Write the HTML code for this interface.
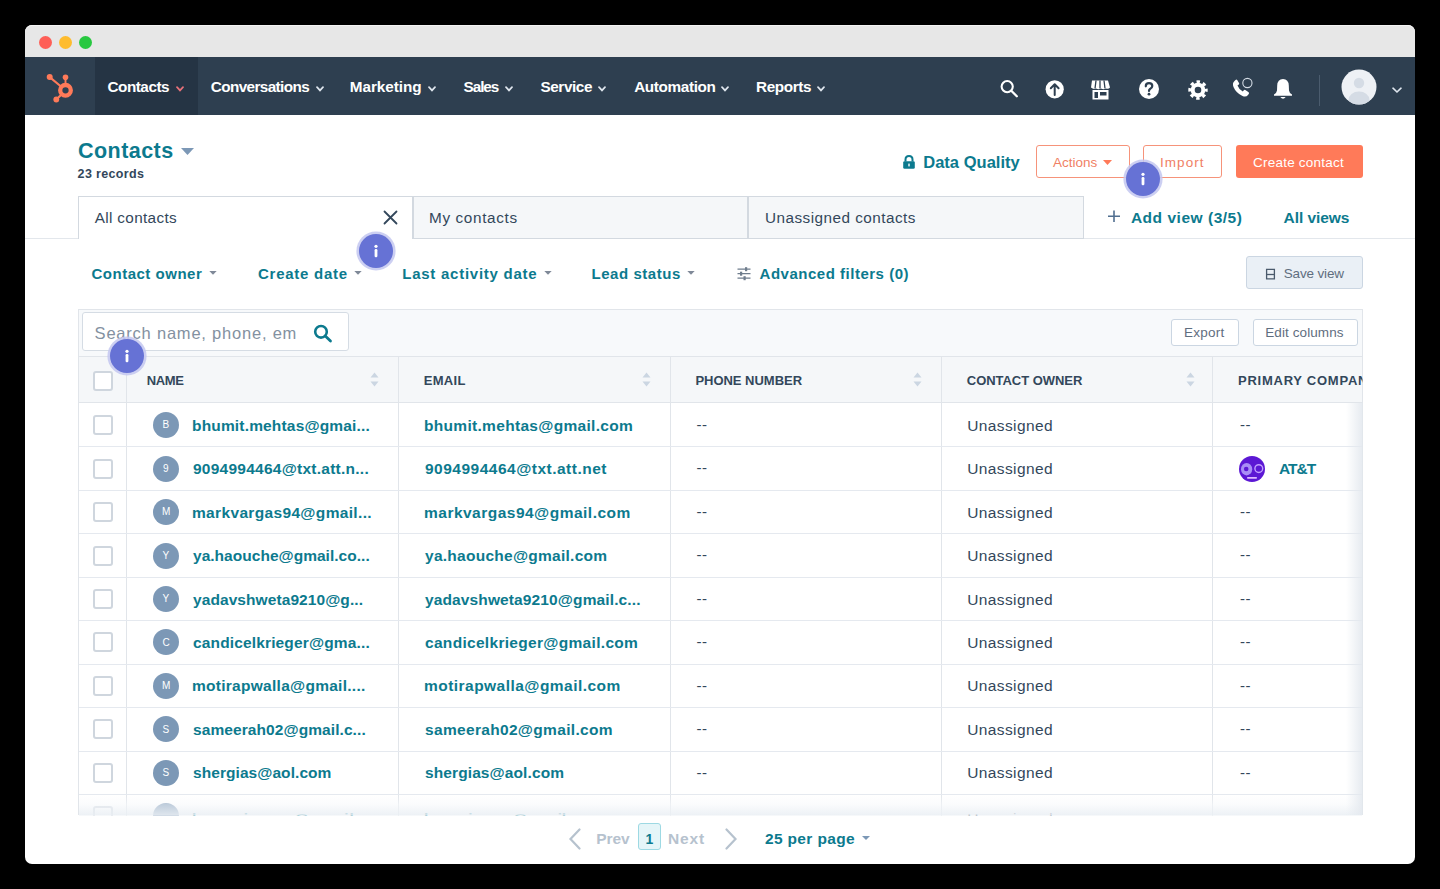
<!DOCTYPE html>
<html><head><meta charset="utf-8"><style>*{box-sizing:border-box;margin:0;padding:0}
html,body{width:1440px;height:889px;background:#000;overflow:hidden;font-family:"Liberation Sans",sans-serif}
.a{position:absolute;white-space:nowrap}
</style></head><body>
<div class="a" style="left:25px;top:25px;width:1390px;height:839px;background:#fff;border-radius:7px"></div>
<div class="a" style="left:25px;top:25px;width:1390px;height:32px;background:#e7e7e7;border-radius:7px 7px 0 0;border-top:1px solid #f4f4f4"></div>
<div class="a" style="left:38.5px;top:35.5px;width:13px;height:13px;border-radius:50%;background:#fe5f57"></div>
<div class="a" style="left:58.5px;top:35.5px;width:13px;height:13px;border-radius:50%;background:#febc2e"></div>
<div class="a" style="left:78.5px;top:35.5px;width:13px;height:13px;border-radius:50%;background:#28c840"></div>
<div class="a" style="left:25px;top:57px;width:1390px;height:58px;background:#2e3f50"></div>
<div class="a" style="left:95px;top:57px;width:102.5px;height:58px;background:#253444"></div>
<div class="a t" style="left:107.50px;top:79.05px;font-size:15.3px;line-height:15.3px;font-weight:700;color:#ffffff;letter-spacing:-0.491px;">Contacts</div>
<svg class="a" style="left:176.0px;top:85.5px" width="8" height="6" viewBox="0 0 8 6"><path d="M1 1.2 L4 4.4 L7 1.2" fill="none" stroke="#e9727a" stroke-width="1.7" stroke-linecap="round"/></svg>
<div class="a t" style="left:210.80px;top:79.05px;font-size:15.3px;line-height:15.3px;font-weight:700;color:#ffffff;letter-spacing:-0.612px;">Conversations</div>
<svg class="a" style="left:315.5px;top:85.5px" width="8" height="6" viewBox="0 0 8 6"><path d="M1 1.2 L4 4.4 L7 1.2" fill="none" stroke="#dfe6ee" stroke-width="1.7" stroke-linecap="round"/></svg>
<div class="a t" style="left:349.80px;top:79.05px;font-size:15.3px;line-height:15.3px;font-weight:700;color:#ffffff;letter-spacing:-0.063px;">Marketing</div>
<svg class="a" style="left:428.0px;top:85.5px" width="8" height="6" viewBox="0 0 8 6"><path d="M1 1.2 L4 4.4 L7 1.2" fill="none" stroke="#dfe6ee" stroke-width="1.7" stroke-linecap="round"/></svg>
<div class="a t" style="left:463.50px;top:79.05px;font-size:15.3px;line-height:15.3px;font-weight:700;color:#ffffff;letter-spacing:-1.042px;">Sales</div>
<svg class="a" style="left:505.0px;top:85.5px" width="8" height="6" viewBox="0 0 8 6"><path d="M1 1.2 L4 4.4 L7 1.2" fill="none" stroke="#dfe6ee" stroke-width="1.7" stroke-linecap="round"/></svg>
<div class="a t" style="left:540.40px;top:79.05px;font-size:15.3px;line-height:15.3px;font-weight:700;color:#ffffff;letter-spacing:-0.388px;">Service</div>
<svg class="a" style="left:597.5px;top:85.5px" width="8" height="6" viewBox="0 0 8 6"><path d="M1 1.2 L4 4.4 L7 1.2" fill="none" stroke="#dfe6ee" stroke-width="1.7" stroke-linecap="round"/></svg>
<div class="a t" style="left:634.20px;top:79.05px;font-size:15.3px;line-height:15.3px;font-weight:700;color:#ffffff;letter-spacing:-0.369px;">Automation</div>
<svg class="a" style="left:721.0px;top:85.5px" width="8" height="6" viewBox="0 0 8 6"><path d="M1 1.2 L4 4.4 L7 1.2" fill="none" stroke="#dfe6ee" stroke-width="1.7" stroke-linecap="round"/></svg>
<div class="a t" style="left:756.00px;top:79.05px;font-size:15.3px;line-height:15.3px;font-weight:700;color:#ffffff;letter-spacing:-0.382px;">Reports</div>
<svg class="a" style="left:817.0px;top:85.5px" width="8" height="6" viewBox="0 0 8 6"><path d="M1 1.2 L4 4.4 L7 1.2" fill="none" stroke="#dfe6ee" stroke-width="1.7" stroke-linecap="round"/></svg>
<svg class="a" style="left:40px;top:66px" width="40" height="42" viewBox="0 0 40 42">
<g fill="none" stroke="#ff7a59" stroke-linecap="round">
<circle cx="25.5" cy="24.3" r="5.3" stroke-width="4.3"/>
<line x1="9.7" y1="11.1" x2="21" y2="20.5" stroke-width="2.1"/>
<line x1="25.5" y1="11.3" x2="25.5" y2="18" stroke-width="1.9"/>
<line x1="21.5" y1="28.5" x2="16.3" y2="33.5" stroke-width="2.2"/>
</g>
<circle cx="9.7" cy="11.1" r="3" fill="#ff7a59"/>
<circle cx="25.5" cy="11.3" r="2.8" fill="#ff7a59"/>
<circle cx="16.3" cy="33.5" r="2.9" fill="#ff7a59"/>
</svg>
<svg class="a" style="left:998px;top:78px" width="22" height="22" viewBox="0 0 22 22">
<circle cx="9.2" cy="8.6" r="5.6" fill="none" stroke="#fff" stroke-width="2.1"/>
<line x1="13.3" y1="12.8" x2="18.8" y2="18.3" stroke="#fff" stroke-width="2.3" stroke-linecap="round"/></svg>
<svg class="a" style="left:1044px;top:79px" width="22" height="22" viewBox="0 0 22 22">
<circle cx="10.7" cy="10.3" r="9.1" fill="#fff"/>
<path d="M10.7 16 V5.5 M6.8 9.2 L10.7 5.3 L14.6 9.2" fill="none" stroke="#2e3f50" stroke-width="2" stroke-linecap="round" stroke-linejoin="round"/></svg>
<svg class="a" style="left:1089px;top:79px" width="23" height="22" viewBox="0 0 23 22">
<path d="M3 1.5 H19 L21 8.5 Q19.5 10.5 17 9.5 Q14.5 10.8 12 9.5 Q9.5 10.8 7 9.5 Q4.5 10.8 2 8.5 Z" fill="#fff"/>
<path d="M7 1.5 L6 9.5 M11 1.5 V9.5 M15 1.5 L16 9.5" stroke="#2e3f50" stroke-width="1.3"/>
<rect x="3.5" y="11" width="16" height="9.5" fill="#fff"/>
<rect x="5.5" y="13" width="3.5" height="6" fill="#2e3f50"/>
<rect x="11" y="13" width="6.5" height="3.5" fill="#2e3f50"/></svg>
<svg class="a" style="left:1138px;top:78px" width="22" height="22" viewBox="0 0 22 22">
<circle cx="11" cy="11" r="10" fill="#fff"/>
<path d="M7.8 8.3 Q7.8 5.2 11 5.2 Q14.3 5.2 14.3 8 Q14.3 9.8 12 11 Q11 11.6 11 13" fill="none" stroke="#2e3f50" stroke-width="2.2" stroke-linecap="round"/>
<circle cx="11" cy="16.2" r="1.4" fill="#2e3f50"/></svg>
<svg class="a" style="left:1186.5px;top:78.5px" width="22" height="22" viewBox="0 0 22 22">
<circle cx="11" cy="11" r="8.2" fill="none" stroke="#fff" stroke-width="3" stroke-dasharray="3.4 3.04" stroke-dashoffset="1.7" transform="rotate(0 11 11)"/>
<circle cx="11" cy="11" r="5.3" fill="none" stroke="#fff" stroke-width="4"/></svg>
<svg class="a" style="left:1230px;top:75px" width="26" height="24" viewBox="0 0 26 24">
<path d="M4.5 6 Q2 8 3.5 12 Q6 18 12.5 21 Q16 22.5 18 20 L19 18.5 Q19.3 17.5 18.3 17 L15.3 15 Q14.5 14.5 13.8 15.3 L12.8 16.5 Q9 14.5 7.5 10.5 L8.8 9.5 Q9.6 8.8 9 8 L7.2 5 Q6.5 4.2 5.5 5 Z" fill="#fff"/>
<circle cx="17.4" cy="8" r="4.6" fill="none" stroke="#d5dde6" stroke-width="1.1"/></svg>
<svg class="a" style="left:1272px;top:77px" width="22" height="24" viewBox="0 0 22 24">
<path d="M11 2 Q16.5 2 16.8 8.5 L17 13.5 Q17.3 16 20 17.5 L20 18.8 H2 L2 17.5 Q4.7 16 5 13.5 L5.2 8.5 Q5.5 2 11 2 Z" fill="#fff"/>
<path d="M8.3 20 Q11 23.5 13.7 20 Z" fill="#fff"/></svg>
<div class="a" style="left:1319px;top:74.5px;width:1px;height:31.5px;background:#4b5c6e"></div>
<svg class="a" style="left:1340.5px;top:69px" width="36" height="36" viewBox="0 0 36 36">
<defs><clipPath id="avc"><circle cx="18" cy="18" r="17.5"/></clipPath></defs>
<circle cx="18" cy="18" r="17.5" fill="#eef1f5"/>
<g clip-path="url(#avc)" fill="#d5dce5"><circle cx="18" cy="14" r="5.2"/><ellipse cx="18" cy="31" rx="10.5" ry="8.5"/></g></svg>
<svg class="a" style="left:1391.5px;top:87px" width="10" height="7" viewBox="0 0 10 7"><path d="M1 1.2 L5 5 L9 1.2" fill="none" stroke="#dfe6ee" stroke-width="1.6" stroke-linecap="round"/></svg>
<div class="a t" style="left:78.00px;top:141.00px;font-size:21.5px;line-height:21.5px;font-weight:700;color:#0c7a8e;letter-spacing:0.453px;">Contacts</div>
<svg class="a" style="left:180.5px;top:147.5px" width="13" height="7" viewBox="0 0 13 7"><path d="M0 0 H13 L6.5 7 Z" fill="#7c98b6"/></svg>
<div class="a t" style="left:77.60px;top:168.32px;font-size:12.5px;line-height:12.5px;font-weight:700;color:#33475b;letter-spacing:0.347px;">23 records</div>
<svg class="a" style="left:901.5px;top:154.5px" width="14" height="14" viewBox="0 0 14 14">
<path d="M3.5 6.5 V4.6 Q3.5 1 7 1 Q10.5 1 10.5 4.6 V6.5" fill="none" stroke="#0c7a8e" stroke-width="2"/>
<rect x="1.2" y="6.2" width="11.6" height="7.6" rx="1.4" fill="#0c7a8e"/><rect x="6.3" y="8.6" width="1.4" height="2.8" fill="#fff"/></svg>
<div class="a t" style="left:923.20px;top:154.03px;font-size:16.5px;line-height:16.5px;font-weight:700;color:#0c7a8e;letter-spacing:0.027px;">Data Quality</div>
<div class="a" style="left:1035.5px;top:145.4px;width:94.5px;height:33.0px;border:1px solid #f6937a;border-radius:3px;background:#fff"></div>
<div class="a t" style="left:1053.00px;top:155.57px;font-size:13.5px;line-height:13.5px;font-weight:400;color:#f07f65;letter-spacing:-0.003px;">Actions</div>
<svg class="a" style="left:1102.5px;top:159.5px" width="9" height="5" viewBox="0 0 9 5"><path d="M0 0 H9 L4.5 5 Z" fill="#ff7a59"/></svg>
<div class="a" style="left:1143.4px;top:145.4px;width:79.0px;height:33.0px;border:1px solid #f6937a;border-radius:3px;background:#fff"></div>
<div class="a t" style="left:1160.00px;top:155.57px;font-size:13.5px;line-height:13.5px;font-weight:400;color:#f07f65;letter-spacing:1.058px;">Import</div>
<div class="a" style="left:1235.5px;top:145px;width:127.09999999999991px;height:33.400000000000006px;background:#ff7a59;border-radius:3px"></div>
<div class="a t" style="left:1253.00px;top:155.57px;font-size:13.5px;line-height:13.5px;font-weight:400;color:#ffffff;letter-spacing:0.227px;">Create contact</div>
<div class="a" style="left:25px;top:238px;width:1390px;height:1px;background:#e3e7ec"></div>
<div class="a" style="left:77.6px;top:195.5px;width:335.9px;height:43.5px;background:#fff;border:1px solid #d3d9e0;border-bottom:none"></div>
<div class="a" style="left:413px;top:195.5px;width:335.29999999999995px;height:43.0px;background:#f5f7f9;border:1px solid #d3d9e0"></div>
<div class="a" style="left:747.8px;top:195.5px;width:336.10000000000014px;height:43.0px;background:#f5f7f9;border:1px solid #d3d9e0"></div>
<div class="a t" style="left:94.80px;top:209.95px;font-size:15.3px;line-height:15.3px;font-weight:400;color:#33475b;letter-spacing:0.330px;">All contacts</div>
<svg class="a" style="left:383px;top:209.5px" width="15" height="15" viewBox="0 0 15 15"><path d="M1.5 1.5 L13.5 13.5 M13.5 1.5 L1.5 13.5" stroke="#33475b" stroke-width="1.8" stroke-linecap="round"/></svg>
<div class="a t" style="left:429.00px;top:209.95px;font-size:15.3px;line-height:15.3px;font-weight:400;color:#33475b;letter-spacing:0.644px;">My contacts</div>
<div class="a t" style="left:765.00px;top:209.95px;font-size:15.3px;line-height:15.3px;font-weight:400;color:#33475b;letter-spacing:0.469px;">Unassigned contacts</div>
<svg class="a" style="left:1107px;top:210px" width="14" height="13" viewBox="0 0 14 13"><path d="M7 0.5 V12 M1 6.2 H13" stroke="#516f90" stroke-width="1.6"/></svg>
<div class="a t" style="left:1130.90px;top:209.68px;font-size:15.5px;line-height:15.5px;font-weight:700;color:#0c7a8e;letter-spacing:0.523px;">Add view (3/5)</div>
<div class="a t" style="left:1283.60px;top:209.68px;font-size:15.5px;line-height:15.5px;font-weight:700;color:#0c7a8e;letter-spacing:-0.071px;">All views</div>
<div class="a t" style="left:91.50px;top:265.60px;font-size:15px;line-height:15px;font-weight:700;color:#0c7a8e;letter-spacing:0.505px;">Contact owner</div>
<svg class="a" style="left:209px;top:270.6px" width="8" height="4" viewBox="0 0 8 4"><path d="M0.3 0 H7.7 L4 3.7 Z" fill="#7f8998"/></svg>
<div class="a t" style="left:258.00px;top:265.60px;font-size:15px;line-height:15px;font-weight:700;color:#0c7a8e;letter-spacing:0.734px;">Create date</div>
<svg class="a" style="left:354px;top:270.6px" width="8" height="4" viewBox="0 0 8 4"><path d="M0.3 0 H7.7 L4 3.7 Z" fill="#7f8998"/></svg>
<div class="a t" style="left:402.30px;top:265.60px;font-size:15px;line-height:15px;font-weight:700;color:#0c7a8e;letter-spacing:0.740px;">Last activity date</div>
<svg class="a" style="left:543.5px;top:270.6px" width="8" height="4" viewBox="0 0 8 4"><path d="M0.3 0 H7.7 L4 3.7 Z" fill="#7f8998"/></svg>
<div class="a t" style="left:591.50px;top:265.60px;font-size:15px;line-height:15px;font-weight:700;color:#0c7a8e;letter-spacing:0.549px;">Lead status</div>
<svg class="a" style="left:687px;top:270.6px" width="8" height="4" viewBox="0 0 8 4"><path d="M0.3 0 H7.7 L4 3.7 Z" fill="#7f8998"/></svg>
<svg class="a" style="left:736.5px;top:266.5px" width="14" height="14" viewBox="0 0 14 14">
<g stroke="#6f7d8d" stroke-width="1.3"><path d="M0.5 2.2 H13.5 M0.5 6.7 H13.5 M0.5 11.2 H13.5"/></g>
<g fill="#6f7d8d"><rect x="8" y="0.2" width="2.2" height="4"/><rect x="3" y="4.7" width="2.2" height="4"/><rect x="6.5" y="9.2" width="2.2" height="4"/></g></svg>
<div class="a t" style="left:759.60px;top:265.60px;font-size:15px;line-height:15px;font-weight:700;color:#0c7a8e;letter-spacing:0.510px;">Advanced filters (0)</div>
<div class="a" style="left:1246px;top:256px;width:116.5px;height:33px;background:#eaf0f6;border:1px solid #cbd6e2;border-radius:3px"></div>
<svg class="a" style="left:1265px;top:267.5px" width="11" height="12" viewBox="0 0 11 12">
<path d="M1.6 1.3 H9.4 V10.9 H1.6 Z" fill="none" stroke="#4a5a6c" stroke-width="1.3"/><path d="M1.6 6.5 H9.4" stroke="#4a5a6c" stroke-width="1.3"/></svg>
<div class="a t" style="left:1283.75px;top:266.57px;font-size:13.5px;line-height:13.5px;font-weight:400;color:#5f6e7f;letter-spacing:-0.160px;">Save view</div>
<div class="a" style="left:77.5px;top:308.6px;width:1285.0px;height:506.9px;background:#fff;border:1px solid #e1e5ea;border-bottom:none"></div>
<div class="a" style="left:0;top:0;width:1440px;height:889px;clip-path:inset(308px 77.5px 73.5px 77.5px)">
<div class="a" style="left:78.5px;top:309.6px;width:1283.0px;height:46.39999999999998px;background:#f7f9fb"></div>
<div class="a" style="left:82.3px;top:312.3px;width:266.59999999999997px;height:39.099999999999966px;background:#fff;border:1px solid #d5dce4;border-radius:3px"></div>
<div class="a t" style="left:94.60px;top:324.63px;font-size:16.5px;line-height:16.5px;font-weight:400;color:#8391a1;letter-spacing:0.784px;">Search name, phone, em</div>
<svg class="a" style="left:313px;top:324px" width="20" height="19" viewBox="0 0 20 19">
<circle cx="8" cy="7.8" r="5.8" fill="none" stroke="#0c7a8e" stroke-width="2.6"/>
<line x1="12.3" y1="12" x2="17.5" y2="17" stroke="#0c7a8e" stroke-width="2.8" stroke-linecap="round"/></svg>
<div class="a" style="left:1170.5px;top:318.75px;width:68.25px;height:26.75px;background:#fff;border:1px solid #cbd6e2;border-radius:3px"></div>
<div class="a t" style="left:1184.00px;top:325.57px;font-size:13.5px;line-height:13.5px;font-weight:400;color:#5f6e7f;letter-spacing:0.247px;">Export</div>
<div class="a" style="left:1252.5px;top:318.75px;width:105.0px;height:26.75px;background:#fff;border:1px solid #cbd6e2;border-radius:3px"></div>
<div class="a t" style="left:1265.25px;top:325.57px;font-size:13.5px;line-height:13.5px;font-weight:400;color:#5f6e7f;letter-spacing:0.088px;">Edit columns</div>
<div class="a" style="left:78.5px;top:356px;width:1283.0px;height:47.39999999999998px;background:#f5f7f9;border-top:1px solid #e1e5ea;border-bottom:1px solid #e1e5ea"></div>
<div class="a" style="left:126.0px;top:356px;width:1.0px;height:459.5px;background:#e1e5ea"></div>
<div class="a" style="left:397.5px;top:356px;width:1.0px;height:459.5px;background:#e1e5ea"></div>
<div class="a" style="left:669.5px;top:356px;width:1.0px;height:459.5px;background:#e1e5ea"></div>
<div class="a" style="left:940.5px;top:356px;width:1.0px;height:459.5px;background:#e1e5ea"></div>
<div class="a" style="left:1212.0px;top:356px;width:1.0px;height:459.5px;background:#e1e5ea"></div>
<div class="a" style="left:93px;top:370.5px;width:20px;height:20.0px;background:#fff;border:2px solid #cfd6de;border-radius:3px"></div>
<div class="a t" style="left:146.70px;top:374.20px;font-size:13px;line-height:13px;font-weight:700;color:#33475b;letter-spacing:-0.368px;">NAME</div>
<div class="a t" style="left:423.75px;top:374.20px;font-size:13px;line-height:13px;font-weight:700;color:#33475b;letter-spacing:0.287px;">EMAIL</div>
<div class="a t" style="left:695.40px;top:374.20px;font-size:13px;line-height:13px;font-weight:700;color:#33475b;letter-spacing:-0.019px;">PHONE NUMBER</div>
<div class="a t" style="left:966.80px;top:374.20px;font-size:13px;line-height:13px;font-weight:700;color:#33475b;letter-spacing:-0.036px;">CONTACT OWNER</div>
<div class="a t" style="left:1238.00px;top:374.20px;font-size:13px;line-height:13px;font-weight:700;color:#33475b;letter-spacing:0.750px;">PRIMARY COMPANY</div>
<svg class="a" style="left:370px;top:371.5px" width="9" height="15" viewBox="0 0 9 15"><path d="M4.5 0.5 L8.5 5.5 H0.5 Z M4.5 14.5 L8.5 9.5 H0.5 Z" fill="#cbd6e2"/></svg>
<svg class="a" style="left:642px;top:371.5px" width="9" height="15" viewBox="0 0 9 15"><path d="M4.5 0.5 L8.5 5.5 H0.5 Z M4.5 14.5 L8.5 9.5 H0.5 Z" fill="#cbd6e2"/></svg>
<svg class="a" style="left:913px;top:371.5px" width="9" height="15" viewBox="0 0 9 15"><path d="M4.5 0.5 L8.5 5.5 H0.5 Z M4.5 14.5 L8.5 9.5 H0.5 Z" fill="#cbd6e2"/></svg>
<svg class="a" style="left:1185.5px;top:371.5px" width="9" height="15" viewBox="0 0 9 15"><path d="M4.5 0.5 L8.5 5.5 H0.5 Z M4.5 14.5 L8.5 9.5 H0.5 Z" fill="#cbd6e2"/></svg>
<div class="a" style="left:93px;top:415.13px;width:20px;height:20.0px;background:#fff;border:2px solid #cfd6de;border-radius:3px"></div>
<div class="a" style="left:153px;top:412.13px;width:26px;height:26px;border-radius:50%;background:#7c98b6"></div>
<div class="a t" style="left:162.50px;top:420.37px;font-size:10px;line-height:10px;font-weight:400;color:#ffffff;letter-spacing:0.000px;">B</div>
<div class="a t" style="left:192.00px;top:417.71px;font-size:15.5px;line-height:15.5px;font-weight:700;color:#0c7a8e;letter-spacing:0.168px;">bhumit.mehtas@gmai...</div>
<div class="a t" style="left:424.00px;top:417.71px;font-size:15.5px;line-height:15.5px;font-weight:700;color:#0c7a8e;letter-spacing:0.308px;">bhumit.mehtas@gmail.com</div>
<div class="a t" style="left:696.50px;top:416.93px;font-size:15px;line-height:15px;font-weight:400;color:#33475b;letter-spacing:0.505px;">--</div>
<div class="a t" style="left:967.20px;top:417.71px;font-size:15.5px;line-height:15.5px;font-weight:400;color:#33475b;letter-spacing:0.385px;">Unassigned</div>
<div class="a t" style="left:1240.00px;top:416.93px;font-size:15px;line-height:15px;font-weight:400;color:#33475b;letter-spacing:0.505px;">--</div>
<div class="a" style="left:78.5px;top:446.35999999999996px;width:1283.0px;height:1.0px;background:#e5e9ef"></div>
<div class="a" style="left:93px;top:458.59px;width:20px;height:20.0px;background:#fff;border:2px solid #cfd6de;border-radius:3px"></div>
<div class="a" style="left:153px;top:455.59px;width:26px;height:26px;border-radius:50%;background:#7c98b6"></div>
<div class="a t" style="left:163.00px;top:463.82px;font-size:10px;line-height:10px;font-weight:400;color:#ffffff;letter-spacing:0.000px;">9</div>
<div class="a t" style="left:193.00px;top:461.17px;font-size:15.5px;line-height:15.5px;font-weight:700;color:#0c7a8e;letter-spacing:0.250px;">9094994464@txt.att.n...</div>
<div class="a t" style="left:425.00px;top:461.17px;font-size:15.5px;line-height:15.5px;font-weight:700;color:#0c7a8e;letter-spacing:0.495px;">9094994464@txt.att.net</div>
<div class="a t" style="left:696.50px;top:460.39px;font-size:15px;line-height:15px;font-weight:400;color:#33475b;letter-spacing:0.505px;">--</div>
<div class="a t" style="left:967.20px;top:461.17px;font-size:15.5px;line-height:15.5px;font-weight:400;color:#33475b;letter-spacing:0.385px;">Unassigned</div>
<svg class="a" style="left:1239px;top:455.59px" width="26" height="26" viewBox="0 0 26 26">
<circle cx="13" cy="13" r="13" fill="#5c18d4"/><ellipse cx="7.6" cy="13.2" rx="5.6" ry="6.2" fill="#a98ef6"/><circle cx="7.2" cy="13" r="2.3" fill="#5c18d4"/>
<circle cx="19.8" cy="12.6" r="3.9" fill="none" stroke="#c3a0ff" stroke-width="1.4"/><rect x="8" y="21" width="10" height="1.7" rx="0.8" fill="#deb8ff"/></svg>
<div class="a t" style="left:1279.00px;top:461.17px;font-size:15.5px;line-height:15.5px;font-weight:700;color:#0c7a8e;letter-spacing:-1.002px;">AT&amp;T</div>
<div class="a" style="left:78.5px;top:489.82px;width:1283.0px;height:1.0px;background:#e5e9ef"></div>
<div class="a" style="left:93px;top:502.04999999999995px;width:20px;height:20.0px;background:#fff;border:2px solid #cfd6de;border-radius:3px"></div>
<div class="a" style="left:153px;top:499.04999999999995px;width:26px;height:26px;border-radius:50%;background:#7c98b6"></div>
<div class="a t" style="left:162.00px;top:507.29px;font-size:10px;line-height:10px;font-weight:400;color:#ffffff;letter-spacing:0.000px;">M</div>
<div class="a t" style="left:192.00px;top:504.63px;font-size:15.5px;line-height:15.5px;font-weight:700;color:#0c7a8e;letter-spacing:0.341px;">markvargas94@gmail...</div>
<div class="a t" style="left:424.00px;top:504.63px;font-size:15.5px;line-height:15.5px;font-weight:700;color:#0c7a8e;letter-spacing:0.487px;">markvargas94@gmail.com</div>
<div class="a t" style="left:696.50px;top:503.85px;font-size:15px;line-height:15px;font-weight:400;color:#33475b;letter-spacing:0.505px;">--</div>
<div class="a t" style="left:967.20px;top:504.63px;font-size:15.5px;line-height:15.5px;font-weight:400;color:#33475b;letter-spacing:0.385px;">Unassigned</div>
<div class="a t" style="left:1240.00px;top:503.85px;font-size:15px;line-height:15px;font-weight:400;color:#33475b;letter-spacing:0.505px;">--</div>
<div class="a" style="left:78.5px;top:533.28px;width:1283.0px;height:1.0px;background:#e5e9ef"></div>
<div class="a" style="left:93px;top:545.51px;width:20px;height:20.0px;background:#fff;border:2px solid #cfd6de;border-radius:3px"></div>
<div class="a" style="left:153px;top:542.51px;width:26px;height:26px;border-radius:50%;background:#7c98b6"></div>
<div class="a t" style="left:162.50px;top:550.75px;font-size:10px;line-height:10px;font-weight:400;color:#ffffff;letter-spacing:0.000px;">Y</div>
<div class="a t" style="left:193.00px;top:548.09px;font-size:15.5px;line-height:15.5px;font-weight:700;color:#0c7a8e;letter-spacing:0.025px;">ya.haouche@gmail.co...</div>
<div class="a t" style="left:425.00px;top:548.09px;font-size:15.5px;line-height:15.5px;font-weight:700;color:#0c7a8e;letter-spacing:0.265px;">ya.haouche@gmail.com</div>
<div class="a t" style="left:696.50px;top:547.31px;font-size:15px;line-height:15px;font-weight:400;color:#33475b;letter-spacing:0.505px;">--</div>
<div class="a t" style="left:967.20px;top:548.09px;font-size:15.5px;line-height:15.5px;font-weight:400;color:#33475b;letter-spacing:0.385px;">Unassigned</div>
<div class="a t" style="left:1240.00px;top:547.31px;font-size:15px;line-height:15px;font-weight:400;color:#33475b;letter-spacing:0.505px;">--</div>
<div class="a" style="left:78.5px;top:576.74px;width:1283.0px;height:1.0px;background:#e5e9ef"></div>
<div class="a" style="left:93px;top:588.97px;width:20px;height:20.0px;background:#fff;border:2px solid #cfd6de;border-radius:3px"></div>
<div class="a" style="left:153px;top:585.97px;width:26px;height:26px;border-radius:50%;background:#7c98b6"></div>
<div class="a t" style="left:162.50px;top:594.21px;font-size:10px;line-height:10px;font-weight:400;color:#ffffff;letter-spacing:0.000px;">Y</div>
<div class="a t" style="left:193.00px;top:591.55px;font-size:15.5px;line-height:15.5px;font-weight:700;color:#0c7a8e;letter-spacing:0.080px;">yadavshweta9210@g...</div>
<div class="a t" style="left:425.00px;top:591.55px;font-size:15.5px;line-height:15.5px;font-weight:700;color:#0c7a8e;letter-spacing:0.123px;">yadavshweta9210@gmail.c...</div>
<div class="a t" style="left:696.50px;top:590.77px;font-size:15px;line-height:15px;font-weight:400;color:#33475b;letter-spacing:0.505px;">--</div>
<div class="a t" style="left:967.20px;top:591.55px;font-size:15.5px;line-height:15.5px;font-weight:400;color:#33475b;letter-spacing:0.385px;">Unassigned</div>
<div class="a t" style="left:1240.00px;top:590.77px;font-size:15px;line-height:15px;font-weight:400;color:#33475b;letter-spacing:0.505px;">--</div>
<div class="a" style="left:78.5px;top:620.2px;width:1283.0px;height:1.0px;background:#e5e9ef"></div>
<div class="a" style="left:93px;top:632.4300000000001px;width:20px;height:20.0px;background:#fff;border:2px solid #cfd6de;border-radius:3px"></div>
<div class="a" style="left:153px;top:629.4300000000001px;width:26px;height:26px;border-radius:50%;background:#7c98b6"></div>
<div class="a t" style="left:162.50px;top:637.67px;font-size:10px;line-height:10px;font-weight:400;color:#ffffff;letter-spacing:0.000px;">C</div>
<div class="a t" style="left:193.00px;top:635.01px;font-size:15.5px;line-height:15.5px;font-weight:700;color:#0c7a8e;letter-spacing:0.146px;">candicelkrieger@gma...</div>
<div class="a t" style="left:425.00px;top:635.01px;font-size:15.5px;line-height:15.5px;font-weight:700;color:#0c7a8e;letter-spacing:0.307px;">candicelkrieger@gmail.com</div>
<div class="a t" style="left:696.50px;top:634.23px;font-size:15px;line-height:15px;font-weight:400;color:#33475b;letter-spacing:0.505px;">--</div>
<div class="a t" style="left:967.20px;top:635.01px;font-size:15.5px;line-height:15.5px;font-weight:400;color:#33475b;letter-spacing:0.385px;">Unassigned</div>
<div class="a t" style="left:1240.00px;top:634.23px;font-size:15px;line-height:15px;font-weight:400;color:#33475b;letter-spacing:0.505px;">--</div>
<div class="a" style="left:78.5px;top:663.66px;width:1283.0px;height:1.0px;background:#e5e9ef"></div>
<div class="a" style="left:93px;top:675.89px;width:20px;height:20.0px;background:#fff;border:2px solid #cfd6de;border-radius:3px"></div>
<div class="a" style="left:153px;top:672.89px;width:26px;height:26px;border-radius:50%;background:#7c98b6"></div>
<div class="a t" style="left:162.00px;top:681.12px;font-size:10px;line-height:10px;font-weight:400;color:#ffffff;letter-spacing:0.000px;">M</div>
<div class="a t" style="left:192.00px;top:678.47px;font-size:15.5px;line-height:15.5px;font-weight:700;color:#0c7a8e;letter-spacing:0.273px;">motirapwalla@gmail....</div>
<div class="a t" style="left:424.00px;top:678.47px;font-size:15.5px;line-height:15.5px;font-weight:700;color:#0c7a8e;letter-spacing:0.465px;">motirapwalla@gmail.com</div>
<div class="a t" style="left:696.50px;top:677.69px;font-size:15px;line-height:15px;font-weight:400;color:#33475b;letter-spacing:0.505px;">--</div>
<div class="a t" style="left:967.20px;top:678.47px;font-size:15.5px;line-height:15.5px;font-weight:400;color:#33475b;letter-spacing:0.385px;">Unassigned</div>
<div class="a t" style="left:1240.00px;top:677.69px;font-size:15px;line-height:15px;font-weight:400;color:#33475b;letter-spacing:0.505px;">--</div>
<div class="a" style="left:78.5px;top:707.12px;width:1283.0px;height:1.0px;background:#e5e9ef"></div>
<div class="a" style="left:93px;top:719.35px;width:20px;height:20.0px;background:#fff;border:2px solid #cfd6de;border-radius:3px"></div>
<div class="a" style="left:153px;top:716.35px;width:26px;height:26px;border-radius:50%;background:#7c98b6"></div>
<div class="a t" style="left:162.50px;top:724.59px;font-size:10px;line-height:10px;font-weight:400;color:#ffffff;letter-spacing:0.000px;">S</div>
<div class="a t" style="left:193.00px;top:721.93px;font-size:15.5px;line-height:15.5px;font-weight:700;color:#0c7a8e;letter-spacing:0.082px;">sameerah02@gmail.c...</div>
<div class="a t" style="left:425.00px;top:721.93px;font-size:15.5px;line-height:15.5px;font-weight:700;color:#0c7a8e;letter-spacing:0.325px;">sameerah02@gmail.com</div>
<div class="a t" style="left:696.50px;top:721.15px;font-size:15px;line-height:15px;font-weight:400;color:#33475b;letter-spacing:0.505px;">--</div>
<div class="a t" style="left:967.20px;top:721.93px;font-size:15.5px;line-height:15.5px;font-weight:400;color:#33475b;letter-spacing:0.385px;">Unassigned</div>
<div class="a t" style="left:1240.00px;top:721.15px;font-size:15px;line-height:15px;font-weight:400;color:#33475b;letter-spacing:0.505px;">--</div>
<div class="a" style="left:78.5px;top:750.5799999999999px;width:1283.0px;height:1.0px;background:#e5e9ef"></div>
<div class="a" style="left:93px;top:762.81px;width:20px;height:20.0px;background:#fff;border:2px solid #cfd6de;border-radius:3px"></div>
<div class="a" style="left:153px;top:759.81px;width:26px;height:26px;border-radius:50%;background:#7c98b6"></div>
<div class="a t" style="left:162.50px;top:768.04px;font-size:10px;line-height:10px;font-weight:400;color:#ffffff;letter-spacing:0.000px;">S</div>
<div class="a t" style="left:193.00px;top:765.39px;font-size:15.5px;line-height:15.5px;font-weight:700;color:#0c7a8e;letter-spacing:0.063px;">shergias@aol.com</div>
<div class="a t" style="left:425.00px;top:765.39px;font-size:15.5px;line-height:15.5px;font-weight:700;color:#0c7a8e;letter-spacing:0.103px;">shergias@aol.com</div>
<div class="a t" style="left:696.50px;top:764.61px;font-size:15px;line-height:15px;font-weight:400;color:#33475b;letter-spacing:0.505px;">--</div>
<div class="a t" style="left:967.20px;top:765.39px;font-size:15.5px;line-height:15.5px;font-weight:400;color:#33475b;letter-spacing:0.385px;">Unassigned</div>
<div class="a t" style="left:1240.00px;top:764.61px;font-size:15px;line-height:15px;font-weight:400;color:#33475b;letter-spacing:0.505px;">--</div>
<div class="a" style="left:78.5px;top:794.04px;width:1283.0px;height:1.0px;background:#e5e9ef"></div>
<div class="a" style="left:93px;top:806.27px;width:20px;height:20.0px;background:#fff;border:2px solid #cfd6de;border-radius:3px"></div>
<div class="a" style="left:153px;top:803.27px;width:26px;height:26px;border-radius:50%;background:#7c98b6"></div>
<div class="a t" style="left:192.00px;top:811.35px;font-size:15.5px;line-height:15.5px;font-weight:700;color:#0c7a8e;letter-spacing:0.875px;">lorem.ipsum@gmail...</div>
<div class="a t" style="left:424.00px;top:811.35px;font-size:15.5px;line-height:15.5px;font-weight:700;color:#0c7a8e;letter-spacing:-0.358px;">lorem.ipsum@gmail.com</div>
<div class="a t" style="left:696.50px;top:810.57px;font-size:15px;line-height:15px;font-weight:400;color:#33475b;letter-spacing:0.505px;">--</div>
<div class="a t" style="left:967.20px;top:811.35px;font-size:15.5px;line-height:15.5px;font-weight:400;color:#33475b;letter-spacing:0.385px;">Unassigned</div>
<div class="a t" style="left:1240.00px;top:808.07px;font-size:15px;line-height:15px;font-weight:400;color:#33475b;letter-spacing:0.505px;">--</div>
<div class="a" style="left:78.5px;top:795px;width:1283.0px;height:20.5px;background:linear-gradient(to bottom, rgba(255,255,255,0) 0%, rgba(247,249,251,0.55) 45%, rgba(234,239,244,0.92) 100%)"></div>
<div class="a" style="left:1346px;top:403.4px;width:16.5px;height:412.1px;background:linear-gradient(to right, rgba(238,242,246,0), rgba(228,233,239,0.95))"></div>
</div>
<svg class="a" style="left:1122.8px;top:159.2px" width="40" height="40" viewBox="0 0 40 40">
<circle cx="20" cy="20" r="19.6" fill="#c3c7f0" fill-opacity="0.85"/><circle cx="20" cy="20" r="17" fill="#6672d5"/>
<circle cx="20" cy="15.3" r="1.6" fill="#fff"/><rect x="18.6" y="18" width="2.8" height="8.3" rx="1.2" fill="#fff"/></svg>
<svg class="a" style="left:356px;top:231.3px" width="40" height="40" viewBox="0 0 40 40">
<circle cx="20" cy="20" r="19.6" fill="#c3c7f0" fill-opacity="0.85"/><circle cx="20" cy="20" r="17" fill="#6672d5"/>
<circle cx="20" cy="15.3" r="1.6" fill="#fff"/><rect x="18.6" y="18" width="2.8" height="8.3" rx="1.2" fill="#fff"/></svg>
<svg class="a" style="left:106.9px;top:336px" width="40" height="40" viewBox="0 0 40 40">
<circle cx="20" cy="20" r="19.6" fill="#c3c7f0" fill-opacity="0.85"/><circle cx="20" cy="20" r="17" fill="#6672d5"/>
<circle cx="20" cy="15.3" r="1.6" fill="#fff"/><rect x="18.6" y="18" width="2.8" height="8.3" rx="1.2" fill="#fff"/></svg>
<svg class="a" style="left:567.5px;top:827.5px" width="14" height="22" viewBox="0 0 14 22"><path d="M11.5 1.5 L2.5 11 L11.5 20.5" fill="none" stroke="#b6c2ce" stroke-width="2.2" stroke-linecap="round"/></svg>
<div class="a t" style="left:596.30px;top:830.78px;font-size:15.5px;line-height:15.5px;font-weight:700;color:#b6c2ce;letter-spacing:-0.097px;">Prev</div>
<div class="a" style="left:638.2px;top:823.4px;width:22.899999999999977px;height:26.700000000000045px;background:#e5f5f8;border:1px solid #9dd9e3;border-radius:3px"></div>
<div class="a t" style="left:645.60px;top:832.05px;font-size:14px;line-height:14px;font-weight:700;color:#0c7a8e;letter-spacing:0.000px;">1</div>
<div class="a t" style="left:667.90px;top:830.78px;font-size:15.5px;line-height:15.5px;font-weight:700;color:#b6c2ce;letter-spacing:0.889px;">Next</div>
<svg class="a" style="left:723.5px;top:827.5px" width="14" height="22" viewBox="0 0 14 22"><path d="M2.5 1.5 L11.5 11 L2.5 20.5" fill="none" stroke="#b6c2ce" stroke-width="2.2" stroke-linecap="round"/></svg>
<div class="a t" style="left:764.90px;top:830.78px;font-size:15.5px;line-height:15.5px;font-weight:700;color:#0c7a8e;letter-spacing:0.367px;">25 per page</div>
<svg class="a" style="left:862px;top:836px" width="8" height="4" viewBox="0 0 8 4"><path d="M0 0 H8 L4 4 Z" fill="#7c98b6"/></svg>
</body></html>
